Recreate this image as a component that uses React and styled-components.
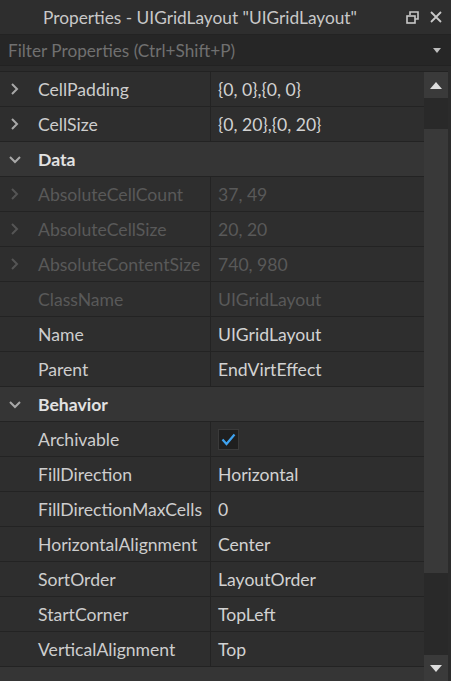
import styled, { createGlobalStyle } from "styled-components";

const GlobalStyle = createGlobalStyle`
  html, body {
    margin: 0;
    padding: 0;
    background: #2e2e2e;
  }
  * {
    box-sizing: border-box;
  }
`;

const Panel = styled.div`
  width: 451px;
  height: 681px;
  overflow: hidden;
  display: flex;
  flex-direction: column;
  background: #2b2b2b;
  font-family: Lato, "Noto Sans", sans-serif;
`;

const TitleBar = styled.div`
  height: 35px;
  flex-shrink: 0;
  display: flex;
  align-items: center;
  background: #2e2e2e;
  border-bottom: 1px solid #232323;
`;

const Title = styled.div`
  flex: 1;
  text-align: center;
  color: #c8c8c8;
  font-size: 17.3px;
`;

const WindowButtons = styled.div`
  width: 51px;
  display: flex;
  align-items: center;
  gap: 11px;
  padding-left: 6px;
`;

const FilterBar = styled.div`
  height: 31px;
  flex-shrink: 0;
  display: flex;
  align-items: center;
  justify-content: space-between;
  padding: 0 10px 0 8px;
  background: #262626;
  border-bottom: 1px solid #222;
`;

const FilterText = styled.span`
  color: #707070;
  font-size: 17.2px;
`;

const Body = styled.div`
  flex: 1;
  display: flex;
  padding-top: 5px;
  padding-right: 3px;
  min-height: 0;
`;

const List = styled.div`
  flex: 1;
  border-top: 1px solid #222;
`;

const Row = styled.div`
  height: 35px;
  display: grid;
  grid-template-columns: ${(p) => (p.$header ? "1fr" : "211px 1fr")};
  background: ${(p) => (p.$header ? "#353535" : "#2e2e2e")};
  border-bottom: 1px solid #232323;
  font-size: 17.6px;
`;

const NameCell = styled.div`
  display: flex;
  align-items: center;
  border-right: ${(p) => (p.$header ? "none" : "1px solid #232323")};
  color: ${(p) => (p.$disabled ? "#595959" : p.$header ? "#e2e2e2" : "#cdcdcd")};
  font-weight: ${(p) => (p.$header ? 700 : 400)};
  white-space: nowrap;
  overflow: hidden;
`;

const Toggle = styled.span`
  width: 38px;
  flex-shrink: 0;
  display: flex;
  align-items: center;
  padding-left: 9px;
`;

const ValueCell = styled.div`
  display: flex;
  align-items: center;
  padding-left: 7px;
  color: ${(p) => (p.$disabled ? "#595959" : "#d2d2d2")};
  white-space: nowrap;
`;

const CheckBox = styled.span`
  width: 21px;
  height: 21px;
  display: flex;
  align-items: center;
  justify-content: center;
  background: #1f1f1f;
  border: 1px solid #3a3a3a;
`;

const ScrollBar = styled.div`
  width: 24px;
  display: flex;
  flex-direction: column;
  background: #292929;
  border-top: 1px solid #222;
`;

const ScrollButton = styled.div`
  height: 26px;
  flex-shrink: 0;
  display: flex;
  align-items: center;
  justify-content: center;
  background: #3a3a3a;
`;

const Track = styled.div`
  flex: 1;
  display: flex;
  flex-direction: column;
  padding: 31px 0 82px;
`;

const Thumb = styled.div`
  flex: 1;
  background: #393939;
`;

function Chevron({ open, dim }) {
  const color = dim ? "#555" : "#a8a8a8";
  return (
    <svg width="12" height="12" viewBox="0 0 12 12">
      {open ? (
        <polyline points="1,4 6,9 11,4" fill="none" stroke={color} strokeWidth="2" />
      ) : (
        <polyline points="3,1 8,6 3,11" fill="none" stroke={color} strokeWidth="2" />
      )}
    </svg>
  );
}

const rows = [
  { name: "CellPadding", value: "{0, 0},{0, 0}", chevron: true },
  { name: "CellSize", value: "{0, 20},{0, 20}", chevron: true },
  { header: "Data" },
  { name: "AbsoluteCellCount", value: "37, 49", chevron: true, disabled: true },
  { name: "AbsoluteCellSize", value: "20, 20", chevron: true, disabled: true },
  { name: "AbsoluteContentSize", value: "740, 980", chevron: true, disabled: true },
  { name: "ClassName", value: "UIGridLayout", disabled: true },
  { name: "Name", value: "UIGridLayout" },
  { name: "Parent", value: "EndVirtEffect" },
  { header: "Behavior" },
  { name: "Archivable", check: true },
  { name: "FillDirection", value: "Horizontal" },
  { name: "FillDirectionMaxCells", value: "0" },
  { name: "HorizontalAlignment", value: "Center" },
  { name: "SortOrder", value: "LayoutOrder" },
  { name: "StartCorner", value: "TopLeft" },
  { name: "VerticalAlignment", value: "Top" },
  { header: " " },
];

export default function App() {
  return (
    <>
      <GlobalStyle />
      <Panel>
        <TitleBar>
          <Title>Properties - UIGridLayout "UIGridLayout"</Title>
          <WindowButtons>
            <svg width="13" height="13" viewBox="0 0 13 13">
              <path d="M4 4V1h8v7H9" fill="none" stroke="#c8c8c8" strokeWidth="1.6" />
              <rect x="1" y="5" width="8" height="7" fill="none" stroke="#c8c8c8" strokeWidth="1.6" />
            </svg>
            <svg width="12" height="12" viewBox="0 0 12 12">
              <path d="M1 1L11 11M11 1L1 11" stroke="#c8c8c8" strokeWidth="1.8" />
            </svg>
          </WindowButtons>
        </TitleBar>

        <FilterBar>
          <FilterText>Filter Properties (Ctrl+Shift+P)</FilterText>
          <svg width="8" height="5" viewBox="0 0 8 5">
            <polygon points="0,0 8,0 4,5" fill="#bdbdbd" />
          </svg>
        </FilterBar>

        <Body>
          <List>
            {rows.map((row, i) =>
              row.header ? (
                <Row key={i} $header>
                  <NameCell $header>
                    <Toggle>{row.header.trim() && <Chevron open />}</Toggle>
                    {row.header.trim()}
                  </NameCell>
                </Row>
              ) : (
                <Row key={i}>
                  <NameCell $disabled={row.disabled}>
                    <Toggle>{row.chevron && <Chevron dim={row.disabled} />}</Toggle>
                    {row.name}
                  </NameCell>
                  <ValueCell $disabled={row.disabled}>
                    {row.check ? (
                      <CheckBox>
                        <svg width="15" height="13" viewBox="0 0 15 13">
                          <polyline points="1.5,6.5 5.5,11 13.5,1.5" fill="none" stroke="#3fa3f0" strokeWidth="2.2" />
                        </svg>
                      </CheckBox>
                    ) : (
                      row.value
                    )}
                  </ValueCell>
                </Row>
              )
            )}
          </List>

          <ScrollBar>
            <ScrollButton>
              <svg width="12" height="7" viewBox="0 0 12 7">
                <polygon points="0,7 12,7 6,0" fill="#dcdcdc" />
              </svg>
            </ScrollButton>
            <Track>
              <Thumb />
            </Track>
            <ScrollButton>
              <svg width="12" height="7" viewBox="0 0 12 7">
                <polygon points="0,0 12,0 6,7" fill="#dcdcdc" />
              </svg>
            </ScrollButton>
          </ScrollBar>
        </Body>
      </Panel>
    </>
  );
}
